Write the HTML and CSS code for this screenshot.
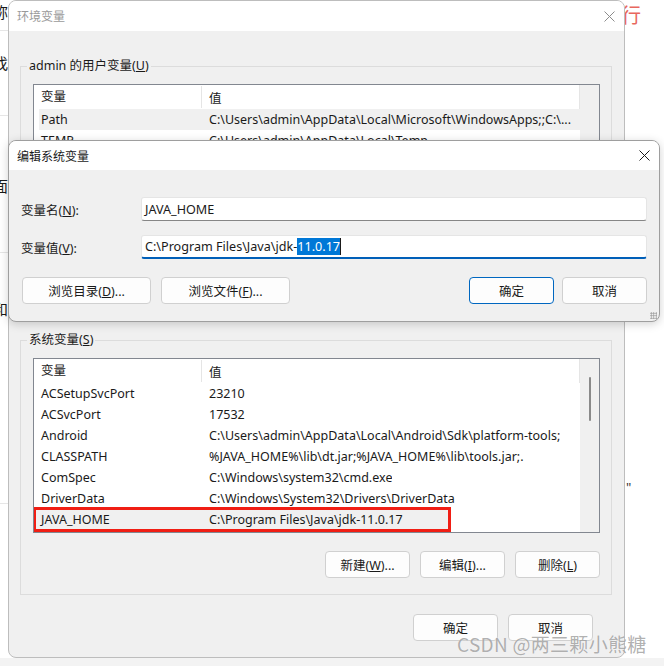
FILE: index.html
```html
<!DOCTYPE html>
<html lang="zh-CN">
<head>
    <meta charset="UTF-8">
    <title>环境变量</title>
    <link rel="stylesheet" href="styles.css">
</head>
<body>
    <div id="desktop">
        <!-- window left behind the dialogs -->
        <div id="behind">
            <div class="behind-row">名称</div>
            <div class="behind-row">查找</div>
            <div class="behind-row">界面</div>
            <div class="behind-row">配置和</div>
        </div>
        <div id="behind-right">运行</div>
        <div id="behind-quote">"</div>

        <div class="window" id="env-window">
            <div class="titlebar inactive">
                <span class="title">环境变量</span>
                <svg class="close" width="11" height="11" viewBox="0 0 11 11"><path d="M0.5 0.5L10.5 10.5M10.5 0.5L0.5 10.5" stroke="#8c8c8c" stroke-width="1"/></svg>
            </div>
            <div class="window-body">
                <fieldset class="group">
                    <legend>admin 的用户变量(<u>U</u>)</legend>
                    <div class="listbox">
                        <div class="list-main">
                            <div class="list-header">
                                <div class="col-name">变量</div>
                                <div class="col-value">值</div>
                            </div>
                            <div class="list-row selected">
                                <div class="col-name">Path</div>
                                <div class="col-value">C:\Users\admin\AppData\Local\Microsoft\WindowsApps;;C:\...</div>
                            </div>
                            <div class="list-row">
                                <div class="col-name">TEMP</div>
                                <div class="col-value">C:\Users\admin\AppData\Local\Temp</div>
                            </div>
                            <div class="list-row">
                                <div class="col-name">TMP</div>
                                <div class="col-value">C:\Users\admin\AppData\Local\Temp</div>
                            </div>
                        </div>
                        <div class="scrollbar"></div>
                    </div>
                    <div class="button-row">
                        <button>新建(<u>N</u>)...</button>
                        <button>编辑(<u>E</u>)...</button>
                        <button>删除(<u>D</u>)</button>
                    </div>
                </fieldset>

                <fieldset class="group">
                    <legend>系统变量(<u>S</u>)</legend>
                    <div class="listbox">
                        <div class="list-main">
                            <div class="list-header">
                                <div class="col-name">变量</div>
                                <div class="col-value">值</div>
                            </div>
                            <div class="list-row">
                                <div class="col-name">ACSetupSvcPort</div>
                                <div class="col-value">23210</div>
                            </div>
                            <div class="list-row">
                                <div class="col-name">ACSvcPort</div>
                                <div class="col-value">17532</div>
                            </div>
                            <div class="list-row">
                                <div class="col-name">Android</div>
                                <div class="col-value">C:\Users\admin\AppData\Local\Android\Sdk\platform-tools;</div>
                            </div>
                            <div class="list-row">
                                <div class="col-name">CLASSPATH</div>
                                <div class="col-value">%JAVA_HOME%\lib\dt.jar;%JAVA_HOME%\lib\tools.jar;.</div>
                            </div>
                            <div class="list-row">
                                <div class="col-name">ComSpec</div>
                                <div class="col-value">C:\Windows\system32\cmd.exe</div>
                            </div>
                            <div class="list-row">
                                <div class="col-name">DriverData</div>
                                <div class="col-value">C:\Windows\System32\Drivers\DriverData</div>
                            </div>
                            <div class="list-row selected marked">
                                <div class="col-name">JAVA_HOME</div>
                                <div class="col-value">C:\Program Files\Java\jdk-11.0.17</div>
                            </div>
                        </div>
                        <div class="scrollbar">
                            <div class="thumb"></div>
                        </div>
                    </div>
                    <div class="button-row">
                        <button>新建(<u>W</u>)...</button>
                        <button>编辑(<u>I</u>)...</button>
                        <button>删除(<u>L</u>)</button>
                    </div>
                </fieldset>

                <div class="dialog-buttons">
                    <button>确定</button>
                    <button>取消</button>
                </div>
            </div>
        </div>

        <div class="window" id="edit-window">
            <div class="titlebar">
                <span class="title">编辑系统变量</span>
                <svg class="close" width="11" height="11" viewBox="0 0 11 11"><path d="M0.5 0.5L10.5 10.5M10.5 0.5L0.5 10.5" stroke="#1a1a1a" stroke-width="1"/></svg>
            </div>
            <div class="window-body edit-body">
                <div class="field-row">
                    <label>变量名(<u>N</u>):</label>
                    <div class="textbox">JAVA_HOME</div>
                </div>
                <div class="field-row">
                    <label>变量值(<u>V</u>):</label>
                    <div class="textbox focused">C:\Program Files\Java\jdk-<span class="selection">11.0.17</span><span class="caret"></span></div>
                </div>
                <div class="edit-buttons">
                    <button class="wide">浏览目录(<u>D</u>)...</button>
                    <button class="wide">浏览文件(<u>F</u>)...</button>
                    <div class="spacer"></div>
                    <button class="default">确定</button>
                    <button>取消</button>
                </div>
                <div class="grip"></div>
            </div>
        </div>

        <div id="watermark">CSDN @两三颗小熊糖</div>
    </div>
</body>
</html>
```

FILE: styles.css
```css
body {
    margin: 0;
    background-color: #f3f3f3;
    font-family: "Noto Sans", "Noto Sans CJK SC", sans-serif;
    font-size: 12.5px;
    color: #1a1a1a;
}
#desktop {
    position: relative;
    width: 664px;
    height: 658px;
    background-color: #ffffff;
    overflow: hidden;
}
#behind {
    position: absolute;
    left: -40px;
    top: 0;
    width: 48px;
    display: flex;
    flex-direction: column;
}
.behind-row {
    font-family: "Noto Sans CJK SC", sans-serif;
    font-size: 15px;
    text-align: right;
    border-bottom: 1px solid #e6e6e6;
}
.behind-row:nth-child(1) { height: 30px; line-height: 24px; }
.behind-row:nth-child(2) { height: 84px; line-height: 64px; }
.behind-row:nth-child(3) { height: 136px; line-height: 140px; }
.behind-row:nth-child(4) { height: 250px; line-height: 112px; }
#behind-right {
    position: absolute;
    left: 601px;
    top: 5px;
    font-family: "Noto Sans CJK SC", sans-serif;
    font-size: 20px;
    line-height: 20px;
    color: #e8675e;
}
#behind-quote {
    position: absolute;
    left: 626px;
    top: 478px;
    font-size: 13px;
    color: #333;
}

.window {
    position: absolute;
    box-sizing: border-box;
    border: 1px solid #bdbdbd;
    border-radius: 8px;
    overflow: hidden;
    display: flex;
    flex-direction: column;
    background-color: #f0f0f0;
}
#env-window {
    left: 8px;
    top: 0;
    width: 617px;
    height: 658px;
}
#edit-window {
    left: 8px;
    top: 140px;
    width: 652px;
    height: 182px;
    border-color: #9e9e9e;
    box-shadow: 0 2px 10px rgba(0, 0, 0, 0.18);
}
.titlebar {
    height: 30px;
    flex-shrink: 0;
    background-color: #ffffff;
    display: flex;
    align-items: center;
    justify-content: space-between;
    padding: 0 9px 0 8px;
    font-size: 12px;
}
#edit-window .titlebar {
    height: 29px;
}
.titlebar.inactive .title {
    color: #9a9a9a;
}
.window-body {
    flex: 1;
    display: flex;
    flex-direction: column;
    padding-top: 26px;
}

/* group boxes */
.group {
    margin: 0 12px 10px 11px;
    padding: 9px 11px 16px 12px;
    border: 1px solid #dcdcdc;
    min-width: 0;
}
.group legend {
    margin-left: -6px;
    padding: 0 2px;
    line-height: 18px;
    font-size: 12.5px;
}
.listbox {
    height: 175px;
    box-sizing: border-box;
    border: 1px solid #828790;
    background-color: #ffffff;
    display: flex;
    overflow: hidden;
}
.list-main {
    flex: 1;
    min-width: 0;
    padding-left: 5px;
}
.list-header {
    display: flex;
    height: 24px;
    align-items: center;
    margin-left: -5px;
    padding-left: 5px;
    border-right: 1px solid #e5e5e5;
}
.list-row {
    display: flex;
    height: 21px;
    align-items: center;
    white-space: nowrap;
}
.list-row.selected {
    background-color: #f0f0f0;
}
.col-name {
    width: 163px;
    flex-shrink: 0;
    box-sizing: border-box;
    padding-left: 2px;
}
.list-header .col-name {
    border-right: 1px solid #e5e5e5;
    height: 22px;
    line-height: 22px;
}
.col-value {
    padding-left: 7px;
    overflow: hidden;
}
.list-row.marked {
    outline: 3px solid #f01e14;
    outline-offset: -1px;
    margin-left: -4px;
    padding-left: 4px;
    margin-right: 131px;
}
.scrollbar {
    width: 19px;
    flex-shrink: 0;
    background-color: #f0f0f0;
    position: relative;
}
.thumb {
    position: absolute;
    left: 9px;
    top: 18px;
    width: 2px;
    height: 44px;
    background-color: #8a8a8a;
    border-radius: 1px;
}

/* buttons */
button {
    font-family: "Noto Sans", "Noto Sans CJK SC", sans-serif;
    font-size: 12.5px;
    color: #1a1a1a;
    height: 27px;
    width: 85px;
    padding: 0;
    background-color: #fdfdfd;
    border: 1px solid #d0d0d0;
    border-radius: 4px;
}
button.default {
    border-color: #0067c0;
}
button.wide {
    width: 129px;
}
.button-row {
    display: flex;
    justify-content: flex-end;
    gap: 10px;
    margin-top: 18px;
}
.dialog-buttons {
    display: flex;
    justify-content: flex-end;
    gap: 10px;
    margin: 9px 31px 0 0;
}

/* edit dialog */
.edit-body {
    padding: 27px 12px 0 12px;
    position: relative;
}
.field-row {
    display: flex;
    align-items: center;
    margin-bottom: 14px;
}
.field-row label {
    width: 120px;
    flex-shrink: 0;
}
.textbox {
    flex: 1;
    height: 24px;
    box-sizing: border-box;
    background-color: #ffffff;
    border: 1px solid #e5e5e5;
    border-bottom-color: #868686;
    border-radius: 3px;
    padding-left: 3px;
    display: flex;
    align-items: center;
    white-space: nowrap;
    font-size: 12.6px;
}
.textbox.focused {
    border-bottom: 2px solid #005fb8;
}
.selection {
    background-color: #0078d7;
    color: #ffffff;
}
.caret {
    display: inline-block;
    width: 1px;
    height: 17px;
    background-color: #1a1a1a;
}
.edit-buttons {
    display: flex;
    gap: 10px;
    margin-top: 4px;
    padding-left: 1px;
}
.edit-buttons .spacer {
    flex: 1;
}
.edit-buttons .default {
    margin-right: -2px;
}
.grip {
    position: absolute;
    right: 2px;
    bottom: 2px;
    width: 7px;
    height: 7px;
    background-image: radial-gradient(circle, #9a9a9a 0.8px, transparent 1px);
    background-size: 2.5px 2.5px;
}

#watermark {
    position: absolute;
    left: 457px;
    top: 630px;
    font-family: "Noto Sans CJK SC", sans-serif;
    font-size: 19px;
    color: rgba(110, 110, 110, 0.55);
    text-shadow: 0 0 1px rgba(255, 255, 255, 0.8);
    letter-spacing: 0.3px;
}
```
